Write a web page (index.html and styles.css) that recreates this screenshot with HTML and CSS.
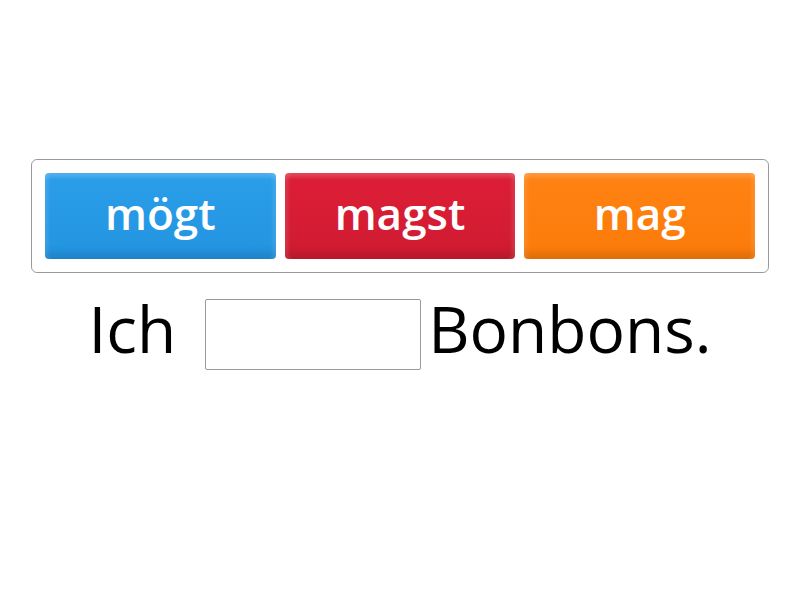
FILE: index.html
```html
<!DOCTYPE html>
<html lang="de">
<head>
    <meta charset="UTF-8">
    <meta name="viewport" content="width=device-width, initial-scale=1.0">
    <title>Lückentext</title>
    <link rel="stylesheet" href="styles.css">
</head>
<body>
    <main class="game">
        <div class="choices">
            <div class="tile blue">mögt</div>
            <div class="tile red">magst</div>
            <div class="tile orange">mag</div>
        </div>
        <div class="sentence">
            <span class="word">Ich</span>
            <span class="gap"></span>
            <span class="word after">Bonbons.</span>
        </div>
    </main>
</body>
</html>
```
FILE: styles.css
```css
/* Grundlayout */
body {
    margin: 0;
    padding: 0;
    background: #fff;
    font-family: "Open Sans", "DejaVu Sans", sans-serif;
}
.game {
    padding: 159px 31px 0;
}
.choices {
    display: flex;
    gap: 9px;
    padding: 13px;
    height: 86px;
    border: 1px solid #9b9b9b;
    border-radius: 6px;
}
.tile {
    flex: 1;
    display: flex;
    align-items: center;
    justify-content: center;
    border-radius: 4px;
    color: #fff;
    font-size: 44px;
    font-weight: 600;
    padding-bottom: 6px;
    box-sizing: border-box;
    box-shadow: inset 0 8px 4px -4px rgba(255, 255, 255, 0.18),
                inset 7px 0 4px -4px rgba(255, 255, 255, 0.12),
                inset -7px 0 4px -4px rgba(255, 255, 255, 0.12),
                inset 0 -12px 8px -6px rgba(0, 0, 0, 0.12);
}
.blue {
    background: linear-gradient(#2b9ee9, #2294e0);
}
.red {
    background: linear-gradient(#dd1e37, #cf1b31);
}
.orange {
    background: linear-gradient(#ff8313, #fb7b0a);
}
.sentence {
    display: flex;
    align-items: flex-start;
    justify-content: center;
    margin-top: 26px;
    font-size: 64px;
    color: #000;
}
.word {
    line-height: 59px;
}
.gap {
    width: 214px;
    height: 69px;
    border: 1px solid #9a9a9a;
    border-radius: 2px;
    margin-left: 29px;
}
.after {
    margin-left: 7px;
}
```
